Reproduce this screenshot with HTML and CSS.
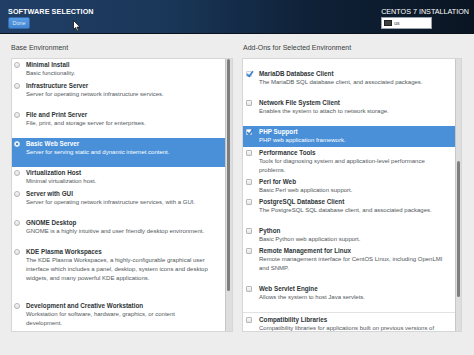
FILE: index.html
```html
<!DOCTYPE html>
<html>
<head>
    <meta charset="UTF-8">
    <title>Software Selection</title>
    <link rel="stylesheet" href="styles.css">
</head>
<body>
    <header class="topbar">
        <div class="spoke">
            <h1>SOFTWARE SELECTION</h1>
            <button class="done">Done</button>
        </div>
        <div class="product">
            <div class="product-name">CENTOS 7 INSTALLATION</div>
            <div class="kbd"><span class="kbd-icon"></span>us</div>
        </div>
        <svg class="pointer" width="8" height="12" viewBox="0 0 8 12">
            <path d="M0.5 0.5 L0.5 9.5 L2.6 7.6 L4 11 L5.4 10.4 L4 7.1 L7 7.1 Z" fill="#fff" stroke="#111" stroke-width="0.8" stroke-linejoin="round"/>
        </svg>
    </header>

    <main class="content">
        <section class="pane pane-env">
            <h2>Base Environment</h2>
            <div class="box">
                <ul class="list">
                    <li class="row">
                        <span class="radio"></span>
                        <div class="text"><b>Minimal Install</b><p>Basic functionality.</p></div>
                    </li>
                    <li class="row spaced">
                        <span class="radio"></span>
                        <div class="text"><b>Infrastructure Server</b><p>Server for operating network infrastructure services.</p></div>
                    </li>
                    <li class="row spaced">
                        <span class="radio"></span>
                        <div class="text"><b>File and Print Server</b><p>File, print, and storage server for enterprises.</p></div>
                    </li>
                    <li class="row spaced selected">
                        <span class="radio on"></span>
                        <div class="text"><b>Basic Web Server</b><p>Server for serving static and dynamic internet content.</p></div>
                    </li>
                    <li class="row">
                        <span class="radio"></span>
                        <div class="text"><b>Virtualization Host</b><p>Minimal virtualization host.</p></div>
                    </li>
                    <li class="row spaced">
                        <span class="radio"></span>
                        <div class="text"><b>Server with GUI</b><p>Server for operating network infrastructure services, with a GUI.</p></div>
                    </li>
                    <li class="row spaced">
                        <span class="radio"></span>
                        <div class="text"><b>GNOME Desktop</b><p>GNOME is a highly intuitive and user friendly desktop environment.</p></div>
                    </li>
                    <li class="row spaced-lg">
                        <span class="radio"></span>
                        <div class="text"><b>KDE Plasma Workspaces</b><p>The KDE Plasma Workspaces, a highly-configurable graphical user<br>interface which includes a panel, desktop, system icons and desktop<br>widgets, and many powerful KDE applications.</p></div>
                    </li>
                    <li class="row">
                        <span class="radio"></span>
                        <div class="text"><b>Development and Creative Workstation</b><p>Workstation for software, hardware, graphics, or content<br>development.</p></div>
                    </li>
                </ul>
                <div class="scroll"><div class="thumb thumb-env"></div></div>
            </div>
        </section>

        <section class="pane pane-addons">
            <h2>Add-Ons for Selected Environment</h2>
            <div class="box">
                <ul class="list addons">
                    <li class="row spaced">
                        <span class="check on"><svg viewBox="0 0 8 8"><path d="M1 4.2 L3.2 6.3 L7 1.3" fill="none" stroke="#3b7fcf" stroke-width="1.6"/></svg></span>
                        <div class="text"><b>MariaDB Database Client</b><p>The MariaDB SQL database client, and associated packages.</p></div>
                    </li>
                    <li class="row spaced">
                        <span class="check"></span>
                        <div class="text"><b>Network File System Client</b><p>Enables the system to attach to network storage.</p></div>
                    </li>
                    <li class="row selected">
                        <span class="check on"><svg viewBox="0 0 8 8"><path d="M1 4.2 L3.2 6.3 L7 1.3" fill="none" stroke="#3b7fcf" stroke-width="1.6"/></svg></span>
                        <div class="text"><b>PHP Support</b><p>PHP web application framework.</p></div>
                    </li>
                    <li class="row tight">
                        <span class="check"></span>
                        <div class="text"><b>Performance Tools</b><p>Tools for diagnosing system and application-level performance<br>problems.</p></div>
                    </li>
                    <li class="row tight">
                        <span class="check"></span>
                        <div class="text"><b>Perl for Web</b><p>Basic Perl web application support.</p></div>
                    </li>
                    <li class="row spaced">
                        <span class="check"></span>
                        <div class="text"><b>PostgreSQL Database Client</b><p>The PostgreSQL SQL database client, and associated packages.</p></div>
                    </li>
                    <li class="row tight">
                        <span class="check"></span>
                        <div class="text"><b>Python</b><p>Basic Python web application support.</p></div>
                    </li>
                    <li class="row spaced">
                        <span class="check"></span>
                        <div class="text"><b>Remote Management for Linux</b><p>Remote management interface for CentOS Linux, including OpenLMI<br>and SNMP.</p></div>
                    </li>
                    <li class="row spaced">
                        <span class="check"></span>
                        <div class="text"><b>Web Servlet Engine</b><p>Allows the system to host Java servlets.</p></div>
                    </li>
                    <li class="row split">
                        <span class="check"></span>
                        <div class="text"><b>Compatibility Libraries</b><p>Compatibility libraries for applications built on previous versions of</p></div>
                    </li>
                </ul>
                <div class="scroll"><div class="thumb thumb-addons"></div></div>
            </div>
        </section>
    </main>
</body>
</html>
```

FILE: styles.css
```css
* { margin: 0; padding: 0; box-sizing: border-box; }

body {
    width: 474px;
    height: 355px;
    overflow: hidden;
    background: #ededed;
    font-family: "Liberation Sans", Arial, sans-serif;
    color: #2e3436;
}

/* top bar */
.topbar {
    position: relative;
    height: 34px;
    display: flex;
    justify-content: space-between;
    background: linear-gradient(90deg, #213f66 0%, #1a3759 35%, #0f2138 65%, #0a1522 100%);
    border-bottom: 1px solid #0b121b;
}
.spoke { padding: 7px 0 0 8px; }
.spoke h1 {
    font-size: 7.2px;
    line-height: 9px;
    font-weight: bold;
    color: #fff;
    letter-spacing: 0.1px;
}
.done {
    display: block;
    margin-top: 1px;
    width: 22px;
    height: 12px;
    background: linear-gradient(#5a9de3, #4486d0);
    border: 1px solid #2f6bb0;
    border-radius: 2px;
    color: #dce9f7;
    font-family: "Liberation Sans", Arial, sans-serif;
    font-size: 5.5px;
}
.product { padding: 7px 5px 0 0; }
.product-name {
    font-size: 7.2px;
    line-height: 9px;
    color: #fff;
}
.kbd {
    margin-top: 1px;
    width: 51px;
    height: 12px;
    background: #fff;
    border: 1px solid #9aa3ad;
    display: flex;
    align-items: center;
    gap: 2px;
    padding-left: 2px;
    font-size: 5px;
    color: #333;
}
.kbd-icon {
    width: 8px;
    height: 6px;
    background: #3f3f3f;
    border: 1px solid #222;
}
.pointer {
    position: absolute;
    left: 73px;
    top: 20px;
}

/* panes */
.content {
    display: flex;
    gap: 9px;
    padding: 9px 0 0 11px;
}
.pane h2 {
    font-size: 7px;
    line-height: 9px;
    font-weight: normal;
    color: #3a3f41;
    margin-bottom: 6px;
}
.pane-env { width: 222px; }
.pane-addons { width: 220px; }
.pane-addons h2 { padding-left: 1px; }

.box {
    height: 274px;
    display: flex;
    background: #fff;
    border: 1px solid #d6d6d6;
    overflow: hidden;
}
.list {
    flex: 1;
    list-style: none;
    overflow: hidden;
}
.list.addons { padding-top: 9px; }

.row {
    display: flex;
    align-items: flex-start;
    padding: 1px 0 2px 2px;
}
.row.tight { padding-bottom: 1px; }
.row.spaced { padding-bottom: 10px; }
.row.spaced-lg { padding-bottom: 17px; }
.row.split { border-top: 1px solid #e2e2e2; padding-top: 2px; }
.row.selected { background: #4a90d9; color: #fff; }

.text { padding-left: 6px; }
.text b {
    display: block;
    font-size: 6.3px;
    line-height: 9px;
    color: #2e3436;
}
.text p {
    font-size: 6px;
    line-height: 9px;
    white-space: nowrap;
    color: #50575a;
}
.selected .text b,
.selected .text p { color: #fff; }

.radio {
    flex: none;
    width: 6px;
    height: 6px;
    margin-top: 1.5px;
    border-radius: 50%;
    border: 1px solid #b4b4b4;
    background: linear-gradient(#fafafa, #e2e2e2);
}
.radio.on {
    border-color: #dfe8f2;
    background: radial-gradient(circle, #4a90d9 0 1.3px, #f4f6f8 1.6px);
}

.addons .row { padding-left: 3px; }
.addons .text { padding-left: 7px; }
.check {
    flex: none;
    width: 6px;
    height: 6px;
    margin-top: 1.5px;
    border: 1px solid #b8b8b8;
    border-radius: 1px;
    background: linear-gradient(#fafafa, #e4e4e4);
    position: relative;
}
.check.on { border-color: #c9d3de; }
.check svg {
    position: absolute;
    left: -1px;
    top: -2px;
    width: 8px;
    height: 8px;
}
.selected .check { background: #fff; }

/* scrollbars */
.scroll {
    flex: none;
    width: 7px;
    background: #dedede;
    border-left: 1px solid #c6c6c6;
    padding: 0 2px 0 1px;
}
.pane-addons .scroll { width: 6px; padding: 0 1px 0 1px; }
.thumb {
    width: 3px;
    background: #7e7e7e;
    border-radius: 2px;
}
.thumb-env { height: 232px; }
.thumb-addons { height: 136px; margin-top: 102px; }
```
